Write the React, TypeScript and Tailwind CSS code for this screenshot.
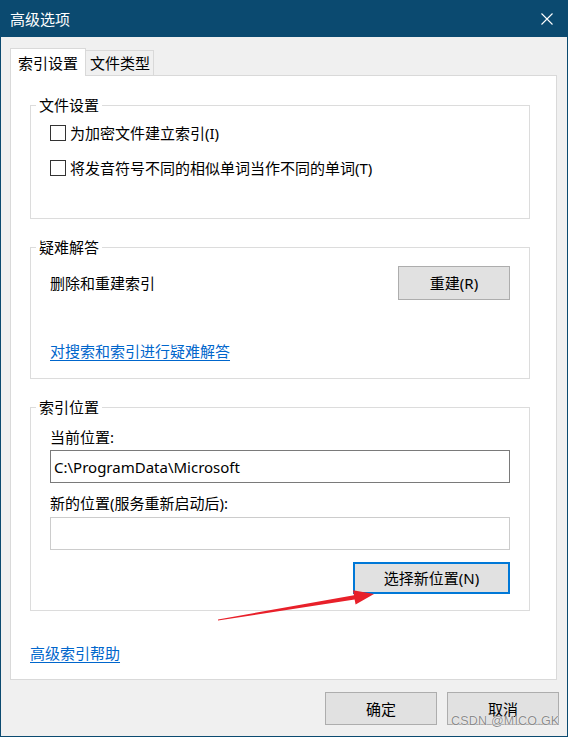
function Checkbox({ label }: { label: string }) {
  return (
    <label className="flex items-center gap-[4px] h-[20px]">
      <span className="w-[16px] h-[16px] border border-[#333333] bg-white shrink-0" />
      <span>{label}</span>
    </label>
  );
}

function Button({ children, className = "" }: { children: React.ReactNode; className?: string }) {
  return (
    <button
      className={
        "flex items-center justify-center bg-[#e1e1e1] text-[15px] leading-[20px] text-black " + className
      }
    >
      {children}
    </button>
  );
}

function Group({ title, children, className = "" }: { title: string; children: React.ReactNode; className?: string }) {
  return (
    <fieldset className={"w-[500px] border border-[#dcdcdc] p-0 m-0 min-w-0 " + className}>
      <legend className="ml-[5px] px-[3px] leading-[20px]">{title}</legend>
      {children}
    </fieldset>
  );
}

export default function App() {
  return (
    <div
      className="relative w-[568px] h-[737px] bg-[#f0f0f0] border-x border-b border-[#0b4a70] flex flex-col text-[15px] leading-[20px] text-black overflow-hidden"
      style={{ fontFamily: "'Noto Sans', 'Noto Sans CJK SC', sans-serif" }}
    >
      {/* title bar */}
      <div className="h-[37px] bg-[#0b4a70] flex items-center justify-between pl-[9px] pr-[14px] text-white shrink-0">
        <span className="text-[15px]">高级选项</span>
        <svg width="12" height="12" viewBox="0 0 12 12">
          <path d="M0.5 0.5 L11.5 11.5 M11.5 0.5 L0.5 11.5" stroke="white" strokeWidth="1.1" />
        </svg>
      </div>

      <div className="px-[9px] pt-[11px] flex flex-col">
        {/* tabs */}
        <div className="flex items-end h-[27px]">
          <div className="relative z-10 -mb-px w-[76px] h-[28px] bg-white border border-b-0 border-[#d9d9d9] flex items-center pl-[7px]">
            索引设置
          </div>
          <div className="w-[68px] h-[25px] bg-[#f0f0f0] border-t border-r border-[#d9d9d9] flex items-center pl-[4px]">
            文件类型
          </div>
        </div>

        {/* panel */}
        <div className="w-[547px] h-[605px] bg-white border border-[#d9d9d9] pl-[19px] pt-[19px] flex flex-col">
          <Group title="文件设置">
            <div className="px-[19px] pt-[8px] pb-[40px] flex flex-col gap-[15px]">
              <Checkbox label="为加密文件建立索引(I)" />
              <Checkbox label="将发音符号不同的相似单词当作不同的单词(T)" />
            </div>
          </Group>

          <Group title="疑难解答" className="mt-[18px]">
            <div className="px-[19px] pt-[9px] pb-[17px] flex flex-col">
              <div className="flex items-center justify-between h-[34px]">
                <span>删除和重建索引</span>
                <Button className="w-[112px] h-[34px] border border-[#adadad]">重建(R)</Button>
              </div>
              <a className="mt-[41px] text-[#0066cc] underline underline-offset-[3px] self-start">
                对搜索和索引进行疑难解答
              </a>
            </div>
          </Group>

          <Group title="索引位置" className="mt-[18px]">
            <div className="px-[19px] pt-[10px] pb-[16px] flex flex-col">
              <span>当前位置:</span>
              <div className="mt-[3px] h-[33px] border border-[#7a7a7a] flex items-center pl-[3px]">
                C:\ProgramData\Microsoft
              </div>
              <span className="mt-[10px]">新的位置(服务重新启动后):</span>
              <div className="mt-[4px] h-[33px] border border-[#cccccc]" />
              <Button className="mt-[12px] self-end w-[157px] h-[32px] border-2 border-[#0078d7]">
                选择新位置(N)
              </Button>
            </div>
          </Group>

          <a className="mt-[32px] text-[#0066cc] underline underline-offset-[3px] self-start">高级索引帮助</a>
        </div>

        {/* bottom buttons */}
        <div className="mt-[12px] -mr-px flex justify-end gap-[10px]">
          <Button className="w-[112px] h-[33px] border border-[#adadad]">确定</Button>
          <Button className="w-[112px] h-[33px] border border-[#adadad]">取消</Button>
        </div>
      </div>

      {/* red annotation arrow */}
      <svg className="absolute left-0 top-0 pointer-events-none" width="568" height="737">
        <polygon
          points="217,620.6 353.6,599.4 354.6,604.4 373,594 352,590.2 353,595.2 217,619.4"
          fill="#e8202a"
        />
      </svg>

      {/* watermark */}
      <span
        className="absolute left-[450px] top-[713px] text-[12.5px] leading-[16px] text-[#8c8c8c] tracking-[0.2px]"
        style={{ fontFamily: "'Liberation Sans', Arial, sans-serif", textShadow: "0 0 1px #fff, 0 0 1px #fff" }}
      >
        CSDN @MICO.GK
      </span>
    </div>
  );
}
